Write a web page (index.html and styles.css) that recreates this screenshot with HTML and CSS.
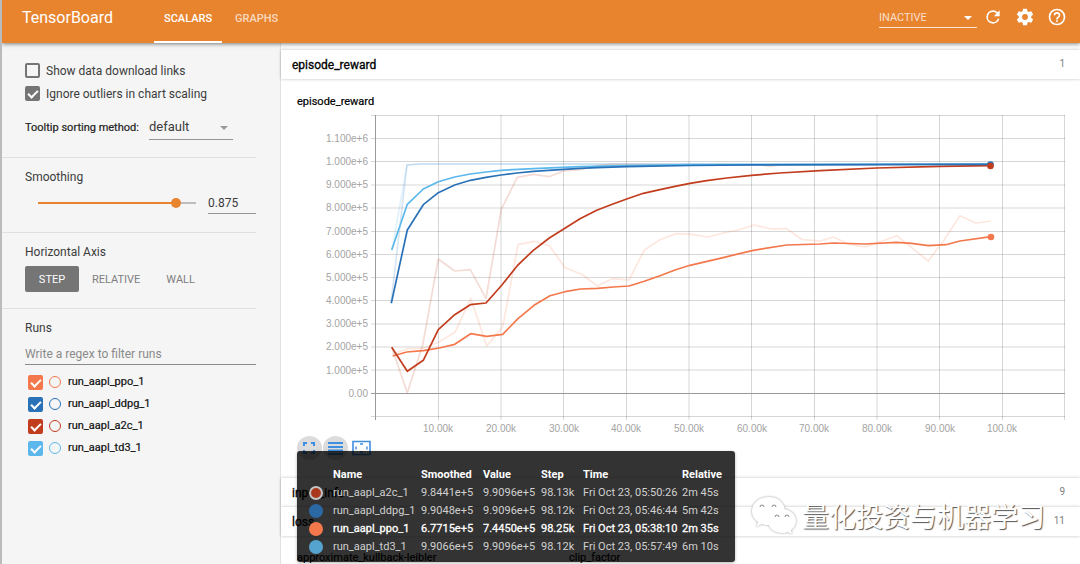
FILE: index.html
```
<!DOCTYPE html>
<html lang="en">
<head>
    <meta charset="UTF-8">
    <meta name="viewport" content="width=device-width, initial-scale=1.0">
    <title>TensorBoard</title>
    <link rel="stylesheet" href="styles.css">
</head>
<body>
    <header class="toolbar">
        <h1 class="brand">TensorBoard</h1>
        <nav class="tabs">
            <button type="button" class="tab active">SCALARS</button>
            <button type="button" class="tab">GRAPHS</button>
        </nav>
        <div class="toolbar-right">
            <div class="dropdown inactive">
                <select aria-label="Inactive plugins">
                    <option>INACTIVE</option>
                </select>
            </div>
            <button type="button" class="icon-button" aria-label="Reload">
                <svg viewBox="0 0 24 24"><path d="M17.65 6.35A7.96 7.96 0 0 0 12 4a8 8 0 1 0 7.73 10h-2.08A6 6 0 1 1 12 6c1.66 0 3.14.69 4.22 1.78L13 11h7V4z"/></svg>
            </button>
            <button type="button" class="icon-button" aria-label="Settings">
                <svg viewBox="0 0 24 24"><path d="M19.43 12.98c.04-.32.07-.64.07-.98s-.03-.66-.07-.98l2.11-1.65c.19-.15.24-.42.12-.64l-2-3.46c-.12-.22-.39-.3-.61-.22l-2.49 1c-.52-.4-1.08-.73-1.69-.98l-.38-2.65A.49.49 0 0 0 14 2h-4c-.25 0-.46.18-.49.42l-.38 2.65c-.61.25-1.17.59-1.69.98l-2.49-1c-.23-.09-.49 0-.61.22l-2 3.46c-.13.22-.07.49.12.64l2.11 1.65c-.04.32-.07.65-.07.98s.03.66.07.98l-2.11 1.65c-.19.15-.24.42-.12.64l2 3.46c.12.22.39.3.61.22l2.49-1c.52.4 1.08.73 1.69.98l.38 2.65c.03.24.24.42.49.42h4c.25 0 .46-.18.49-.42l.38-2.65c.61-.25 1.17-.59 1.69-.98l2.49 1c.23.09.49 0 .61-.22l2-3.46c.12-.22.07-.49-.12-.64l-2.11-1.65zM12 15.5a3.5 3.5 0 1 1 0-7 3.5 3.5 0 0 1 0 7z"/></svg>
            </button>
            <button type="button" class="icon-button" aria-label="Help">
                <svg viewBox="0 0 24 24"><path d="M11 18h2v-2h-2v2zm1-16a10 10 0 1 0 0 20 10 10 0 0 0 0-20zm0 18a8 8 0 1 1 0-16 8 8 0 0 1 0 16zm0-14a4 4 0 0 0-4 4h2a2 2 0 1 1 4 0c0 2-3 1.75-3 5h2c0-2.25 3-2.5 3-5a4 4 0 0 0-4-4z"/></svg>
            </button>
        </div>
    </header>

    <div class="layout">
        <aside class="sidebar">
            <section class="group options">
                <label class="option"><input type="checkbox" class="check"> Show data download links</label>
                <label class="option"><input type="checkbox" class="check" checked> Ignore outliers in chart scaling</label>
                <div class="sorting">
                    <label for="sorting">Tooltip sorting method:</label>
                    <div class="dropdown method">
                        <select id="sorting">
                            <option>default</option>
                        </select>
                    </div>
                </div>
            </section>

            <section class="group smoothing">
                <label class="group-title" for="smoothing">Smoothing</label>
                <div class="slider-row">
                    <input type="range" id="smoothing" class="slider" min="0" max="1" step="0.001" value="0.875">
                    <input type="text" class="slider-value" aria-label="Smoothing value" value="0.875">
                </div>
            </section>

            <section class="group axis">
                <h2 class="group-title">Horizontal Axis</h2>
                <div class="axis-buttons">
                    <button type="button" class="selected">STEP</button>
                    <button type="button">RELATIVE</button>
                    <button type="button">WALL</button>
                </div>
            </section>

            <section class="group runs">
                <h2 class="group-title">Runs</h2>
                <input type="text" class="filter" aria-label="Filter runs" placeholder="Write a regex to filter runs">
                <ul class="run-list">
                    <li class="ppo"><input type="checkbox" class="check" id="ppo" checked><input type="radio" name="run" aria-label="Only run_aapl_ppo_1"><label for="ppo">run_aapl_ppo_1</label></li>
                    <li class="ddpg"><input type="checkbox" class="check" id="ddpg" checked><input type="radio" name="run" aria-label="Only run_aapl_ddpg_1"><label for="ddpg">run_aapl_ddpg_1</label></li>
                    <li class="a2c"><input type="checkbox" class="check" id="a2c" checked><input type="radio" name="run" aria-label="Only run_aapl_a2c_1"><label for="a2c">run_aapl_a2c_1</label></li>
                    <li class="td3"><input type="checkbox" class="check" id="td3" checked><input type="radio" name="run" aria-label="Only run_aapl_td3_1"><label for="td3">run_aapl_td3_1</label></li>
                </ul>
            </section>
        </aside>

        <main class="content">
            <h2 class="pane-header">episode_reward <span class="count">1</span></h2>
            <div class="pane">
                <h3 class="chart-title">episode_reward</h3>
                <svg class="chart" viewBox="297 112 769 324">
                    <!-- grid -->
                    <path class="grid" d="M371 115.5H1065M371 138.5H1065M371 161.5H1065M371 185H1065M371 208H1065M371 231.5H1065M371 254.5H1065M371 277.5H1065M371 300.5H1065M371 324H1065M371 347H1065M371 370H1065M371 416.5H1065"/>
                    <path class="grid" d="M438.5 115V420M501 115V420M563.5 115V420M626.5 115V420M689 115V420M751.5 115V420M814.5 115V420M877 115V420M939.5 115V420M1002.5 115V420M1064.5 115V420"/>
                    <path class="axis-line" d="M375.5 115V420M371 393.5H1065"/>

                    <g class="labels y-labels">
                        <text x="368" y="142">1.100e+6</text>
                        <text x="368" y="165">1.000e+6</text>
                        <text x="368" y="188">9.000e+5</text>
                        <text x="368" y="211">8.000e+5</text>
                        <text x="368" y="235">7.000e+5</text>
                        <text x="368" y="258">6.000e+5</text>
                        <text x="368" y="281">5.000e+5</text>
                        <text x="368" y="304">4.000e+5</text>
                        <text x="368" y="327">3.000e+5</text>
                        <text x="368" y="350">2.000e+5</text>
                        <text x="368" y="374">1.000e+5</text>
                        <text x="368" y="397">0.00</text>
                    </g>
                    <g class="labels x-labels">
                        <text x="438" y="432">10.00k</text>
                        <text x="501" y="432">20.00k</text>
                        <text x="564" y="432">30.00k</text>
                        <text x="626" y="432">40.00k</text>
                        <text x="689" y="432">50.00k</text>
                        <text x="752" y="432">60.00k</text>
                        <text x="814" y="432">70.00k</text>
                        <text x="877" y="432">80.00k</text>
                        <text x="940" y="432">90.00k</text>
                        <text x="1002" y="432">100.0k</text>
                    </g>

                    <!-- raw values -->
                    <polyline class="raw td3" points="392,250 407,165 420,164 990,164"/>
                    <polyline class="raw ddpg" points="391,303 407,165 420,164 990,164"/>
                    <polyline class="raw a2c" points="391.7,347.3 407.3,392.7 422.7,345 438.3,259 454.7,271 470.3,269.7 486,298.3 501.3,209.3 517.3,177.3 533.3,174.3 549.3,176.7 563.3,171 580,169.7 597,165.5 610,164.3 760,165 770,166.3 780,165 990,164"/>
                    <polyline class="raw ppo" points="392.7,354 407.3,348.7 423.3,348.3 439.3,341.7 455,332.3 470.7,298.3 486.7,346 502.7,326.7 518,244.7 534,241.3 549.3,245.7 565,267.7 581.7,274.3 597.3,286 612.3,278.7 629,280 644.3,250 660,239.7 675.7,233.7 691.7,234.3 707.7,237 723.3,233 738.3,230 754.3,225 771,229 786.7,228.7 802.3,239.7 820,241 833.3,237 849.3,244.3 865,247 880,242 896.7,235.7 928.3,261 944,240 960,215.7 975.7,223 991,221"/>

                    <!-- smoothed values -->
                    <polyline class="line ppo" points="392.7,356 406.7,352 423.3,350.7 439.3,348 454.7,344.3 470.7,333.7 486.7,336.3 502.7,334.3 518,318.7 534,305.3 550,295.7 565,291.7 580.7,289 597.3,288.3 613.3,287 629,286 644.3,281.3 660,275.7 675,270 690,265.3 720,258.3 753.3,250.3 786.7,245 820,244 833.3,243 865,244 896.7,242.3 911.7,243.3 928.3,245.7 946,244.7 960,241 991,236.7"/>
                    <polyline class="line a2c" points="391.7,347.3 407.3,371.3 423.3,360.3 438.3,329.7 454.7,314.7 470.3,304.7 486,303 501.7,285.3 517.3,265.7 533.3,250.3 549.3,238 563.7,229 580,218.7 596.7,210.3 612.3,204.3 626.7,199 643.3,193.3 660,189.7 675,186.3 690,183.3 706.7,180.7 726.7,178 751.7,175.3 780,173 820,170.7 876.7,168 940,166.3 990,165.7"/>
                    <polyline class="line td3" points="391.7,250 407.3,204.3 423.3,189 438.3,181.7 454.7,177 470.3,174 486,172 501,170.3 533,168.7 580,166.7 626,165.7 690,164.7 990,164"/>
                    <polyline class="line ddpg" points="391.3,303.3 407.3,230 423.3,204.7 438.3,192.7 454.7,185 470.3,180.3 486,177.3 501,175 517,173 533.3,171.3 563.7,169.3 580,168.3 597,167.7 626.7,166.7 690,165.5 753,164.8 990,164.3"/>
                    <circle class="dot ddpg" cx="990.5" cy="164.5" r="3.3"/>
                    <circle class="dot a2c" cx="990.5" cy="166" r="3.3"/>
                    <circle class="dot ppo" cx="991" cy="237" r="3.3"/>
                </svg>

                <div class="chart-actions">
                    <button type="button" class="round" aria-label="Toggle full size">
                        <svg viewBox="0 0 24 24"><path d="M7 10V7h3M14 7h3v3M17 14v3h-3M10 17H7v-3"/></svg>
                    </button>
                    <button type="button" class="round" aria-label="Toggle log scale">
                        <svg viewBox="0 0 24 24"><path d="M5 7h15M5 11h15M5 14.5h15M5 18h15"/></svg>
                    </button>
                    <button type="button" aria-label="Fit domain to data">
                        <svg viewBox="0 0 24 24"><path class="frame" d="M4 5.5h17v13H4z"/><path class="dots" d="M7 10.5v3M18 10.5v3M11 8h3M11 16h3"/></svg>
                    </button>
                </div>

                <div class="tooltip">
                    <table>
                        <thead>
                            <tr><th class="swatch"></th><th class="name">Name</th><th class="smoothed">Smoothed</th><th class="value">Value</th><th class="step">Step</th><th class="time">Time</th><th>Relative</th></tr>
                        </thead>
                        <tbody>
                            <tr><td><span class="marker a2c ring"></span></td><td>run_aapl_a2c_1</td><td>9.8441e+5</td><td>9.9096e+5</td><td>98.13k</td><td>Fri Oct 23, 05:50:26</td><td>2m 45s</td></tr>
                            <tr><td><span class="marker ddpg"></span></td><td>run_aapl_ddpg_1</td><td>9.9048e+5</td><td>9.9096e+5</td><td>98.12k</td><td>Fri Oct 23, 05:46:44</td><td>5m 42s</td></tr>
                            <tr class="closest"><td><span class="marker ppo"></span></td><td>run_aapl_ppo_1</td><td>6.7715e+5</td><td>7.4450e+5</td><td>98.25k</td><td>Fri Oct 23, 05:38:10</td><td>2m 35s</td></tr>
                            <tr><td><span class="marker td3"></span></td><td>run_aapl_td3_1</td><td>9.9066e+5</td><td>9.9096e+5</td><td>98.12k</td><td>Fri Oct 23, 05:57:49</td><td>6m 10s</td></tr>
                        </tbody>
                    </table>
                </div>
            </div>

            <h2 class="pane-header">input_info <span class="count">9</span></h2>
            <h2 class="pane-header">loss <span class="count">11</span></h2>
            <div class="pane pane-row">
                <h3 class="chart-title">approximate_kullback-leibler</h3>
                <h3 class="chart-title">clip_factor</h3>
            </div>
        </main>
    </div>

    <div class="watermark">
        <svg viewBox="0 0 46 40">
            <path d="M18 1C8 1 1 7 1 15c0 5 2 8 6 11l-2 5 6-3c2 1 4 1 7 1 9 0 16-6 16-14S27 1 18 1z"/>
            <path d="M31 13c-8 0-14 5-14 12s6 12 14 12c2 0 4 0 5-1l5 2-1-4c3-2 5-5 5-9 0-7-6-12-14-12z"/>
            <path class="eyes" d="M9 11a2 2 0 0 1 4 0M21 11a2 2 0 0 1 4 0M24 21a2 2 0 0 1 4 0M34 21a2 2 0 0 1 4 0"/>
        </svg>
        <span lang="zh">量化投资与机器学习</span>
    </div>
</body>
</html>
```
FILE: styles.css
```
* {
    box-sizing: border-box;
}
body {
    margin: 0;
    height: 100vh;
    overflow: hidden;
    display: flex;
    flex-direction: column;
    position: relative;
    border-left: 2px solid #b9bbbd;
    font-family: Roboto, "Liberation Sans", sans-serif;
    font-size: 12px;
    color: #3c3c3c;
    background-color: #fff;
}
h1, h2, h3, ul {
    margin: 0;
    padding: 0;
    font-weight: 400;
}
button, input, select {
    font-family: inherit;
    margin: 0;
    padding: 0;
    border: none;
    background: none;
}
select, input {
    appearance: none;
    outline: none;
    border-radius: 0;
}

/* run colours */
.ppo { --run: #f4784c; }
.ddpg { --run: #2a72b8; }
.a2c { --run: #c23c1e; }
.td3 { --run: #5cb8ec; }

/* top bar */
.toolbar {
    flex: none;
    position: relative;
    z-index: 2;
    display: flex;
    height: 43px;
    padding: 0 13px 0 20px;
    color: #fff;
    background-color: #e8842e;
    box-shadow: 0 1px 4px rgba(0, 0, 0, 0.5);
}
.brand {
    width: 132px;
    font-size: 16px;
    line-height: 36px;
}
.tabs {
    display: flex;
    gap: 3px;
}
.tab {
    padding: 0 10px 5px;
    border-bottom: 2px solid transparent;
    font-size: 11px;
    font-weight: 500;
    color: rgba(255, 255, 255, 0.7);
}
.tab.active {
    color: #fff;
    border-bottom-color: #fff;
}
.toolbar-right {
    margin-left: auto;
    padding-top: 7px;
    display: flex;
    gap: 12px;
}
.icon-button {
    width: 20px;
    height: 20px;
}
.icon-button svg {
    display: block;
    width: 20px;
    fill: #fff;
}

.dropdown {
    position: relative;
    border-bottom: 1px solid #949494;
}
.dropdown select {
    width: 100%;
    height: 20px;
    color: inherit;
    font-size: 13px;
}
.dropdown::after {
    content: "";
    position: absolute;
    right: 5px;
    top: 9px;
    border: 4px solid transparent;
    border-top-color: #9a9a9a;
    border-bottom: none;
}
.inactive {
    width: 98px;
    height: 21px;
    margin-right: -6px;
    border-color: rgba(255, 255, 255, 0.8);
    color: rgba(255, 255, 255, 0.75);
}
.inactive select {
    font-size: 11px;
}
.inactive::after {
    border-top-color: #fff;
}

/* sidebar */
.layout {
    flex: 1;
    display: flex;
    min-height: 0;
}
.sidebar {
    flex: none;
    width: 279px;
    padding-right: 24px;
    background-color: #f5f5f5;
    border-right: 1px solid #e2e2e2;
}
.group {
    padding-left: 23px;
    border-bottom: 1px solid #e0e0e0;
}
.group-title {
    display: block;
    font-size: 12px;
    line-height: 16px;
}
.options {
    height: 115px;
    padding-top: 16px;
}
.option {
    display: flex;
    align-items: center;
    gap: 6px;
    height: 23px;
}
.check {
    flex: none;
    width: 15px;
    height: 15px;
    border: 2px solid #757575;
    border-radius: 2px;
    position: relative;
}
.check:checked {
    background-color: #757575;
}
.check:checked::after {
    content: "";
    position: absolute;
    left: 3px;
    top: 0;
    width: 4px;
    height: 8px;
    border: solid #fff;
    border-width: 0 2px 2px 0;
    transform: rotate(45deg);
}
.sorting {
    display: flex;
    gap: 10px;
    padding-top: 12px;
    font-size: 11px;
    line-height: 22px;
    color: #222;
}
.sorting label {
    -webkit-text-stroke: 0.2px;
}
.method {
    width: 84px;
    color: #3c3c3c;
}
.method select {
    height: 19px;
}

.smoothing {
    height: 75px;
    padding-top: 11px;
}
.slider-row {
    display: flex;
    align-items: center;
    justify-content: space-between;
    padding: 7px 0 0 8px;
}
.slider {
    width: 168px;
    height: 12px;
    background: linear-gradient(to right, #e8842e 87.5%, #bdbdbd 87.5%) center / calc(100% - 10px) 2px no-repeat;
}
.slider::-webkit-slider-thumb {
    appearance: none;
    width: 10px;
    height: 10px;
    border-radius: 50%;
    background-color: #e8842e;
}
.slider-value {
    width: 48px;
    height: 22px;
    border-bottom: 1px solid #949494;
    font-size: 12px;
    color: #3c3c3c;
}

.axis {
    height: 76px;
    padding-top: 11px;
}
.axis-buttons {
    display: flex;
    padding-top: 6px;
}
.axis-buttons button {
    height: 26px;
    padding: 0 13px;
    border-radius: 2px;
    font-size: 11px;
    color: #808080;
}
.axis-buttons .selected {
    width: 54px;
    color: #fff;
    background-color: #757575;
}

.runs {
    padding-top: 11px;
    border-bottom: none;
}
.filter {
    width: 100%;
    height: 21px;
    margin-top: 8px;
    border-bottom: 1px solid #8a8a8a;
    font-size: 12px;
}
.filter::placeholder {
    color: #8a8a8a;
}
.run-list {
    padding: 6px 0 0 3px;
    list-style: none;
}
.run-list li {
    display: flex;
    align-items: center;
    height: 22px;
    font-size: 11px;
    color: #111;
}
.run-list .check {
    border-color: var(--run);
    background-color: var(--run);
}
.run-list input[type="radio"] {
    width: 12px;
    height: 12px;
    margin: 0 7px 0 6px;
    border: 1px solid var(--run);
    border-radius: 50%;
}
.run-list label {
    padding-bottom: 1px;
    -webkit-text-stroke: 0.2px;
}

/* charts */
.content {
    flex: 1;
    min-width: 0;
    padding-top: 7px;
}
.pane-header {
    display: flex;
    justify-content: space-between;
    height: 29px;
    padding: 0 15px 0 11px;
    font-size: 12px;
    line-height: 30px;
    color: #000;
    background-color: #fff;
    box-shadow: 0 0 3px rgba(0, 0, 0, 0.25);
    -webkit-text-stroke: 0.3px;
}
.count {
    font-size: 10px;
    line-height: 27px;
    color: #808080;
    -webkit-text-stroke: 0;
}
.pane {
    position: relative;
    padding: 13px 14px 18px 16px;
}
.chart-title {
    font-size: 11px;
    line-height: 20px;
    color: #000;
    -webkit-text-stroke: 0.2px;
}
.chart {
    display: block;
    width: 100%;
}
.chart .grid {
    stroke: #000;
    stroke-opacity: 0.16;
    fill: none;
}
.axis-line {
    stroke: #999;
}
.labels {
    font-family: "Liberation Sans", Arial, sans-serif;
    font-size: 10px;
    fill: #a3a3a3;
}
.y-labels {
    text-anchor: end;
}
.x-labels {
    text-anchor: middle;
}
.line, .raw {
    fill: none;
    stroke: var(--run);
    stroke-width: 1.7;
    stroke-linejoin: round;
}
.raw {
    stroke-opacity: 0.18;
}
.dot {
    fill: var(--run);
}
.chart-actions {
    display: flex;
    gap: 1px;
}
.chart-actions button {
    width: 25px;
    height: 24px;
    border-radius: 50%;
}
.chart-actions .round {
    background-color: #dcdcdc;
}
.chart-actions svg {
    display: block;
    width: 24px;
    fill: none;
    stroke: #3f8fe0;
    stroke-width: 2;
}
.chart-actions .frame {
    stroke-width: 1.6;
}
.chart-actions .dots {
    stroke-width: 1.4;
}

.tooltip {
    position: absolute;
    z-index: 1;
    left: 16px;
    top: 372px;
    padding: 15px 0 6px;
    border-radius: 3px;
    color: #d0d0d0;
    background-color: rgba(0, 0, 0, 0.8);
    box-shadow: 0 1px 3px rgba(0, 0, 0, 0.3);
}
.tooltip table {
    width: 438px;
    table-layout: fixed;
    border-collapse: collapse;
    font-size: 11px;
    line-height: 18px;
    text-align: left;
    white-space: nowrap;
}
.tooltip th, .tooltip td {
    padding: 0;
}
.tooltip th {
    font-weight: 700;
    color: #fff;
}
.tooltip .closest {
    color: #fff;
    -webkit-text-stroke: 0.3px;
}
.swatch { width: 36px; }
.name { width: 88px; }
.smoothed { width: 62px; }
.value { width: 58px; }
.step { width: 42px; }
.time { width: 99px; }
.marker {
    display: block;
    width: 14px;
    height: 14px;
    margin-left: 12px;
    border-radius: 50%;
    background-color: var(--run);
    opacity: 0.85;
}
.closest .marker {
    opacity: 1;
}
.marker.ring {
    border: 2px solid #ddd;
}
.pane-row {
    display: grid;
    grid-template-columns: 272px 1fr;
    padding-top: 12px;
}

.watermark {
    position: absolute;
    z-index: 3;
    right: 35px;
    bottom: 28px;
    display: flex;
    align-items: center;
    gap: 5px;
    font-family: "Noto Sans CJK SC", sans-serif;
    font-size: 27px;
    line-height: 40px;
    color: #fff;
    text-shadow: 1px 1px 1px #555;
}
.watermark svg {
    width: 46px;
    fill: #fff;
    filter: drop-shadow(0 0 1px #999);
}
.watermark .eyes {
    fill: none;
    stroke: #888;
}
```
